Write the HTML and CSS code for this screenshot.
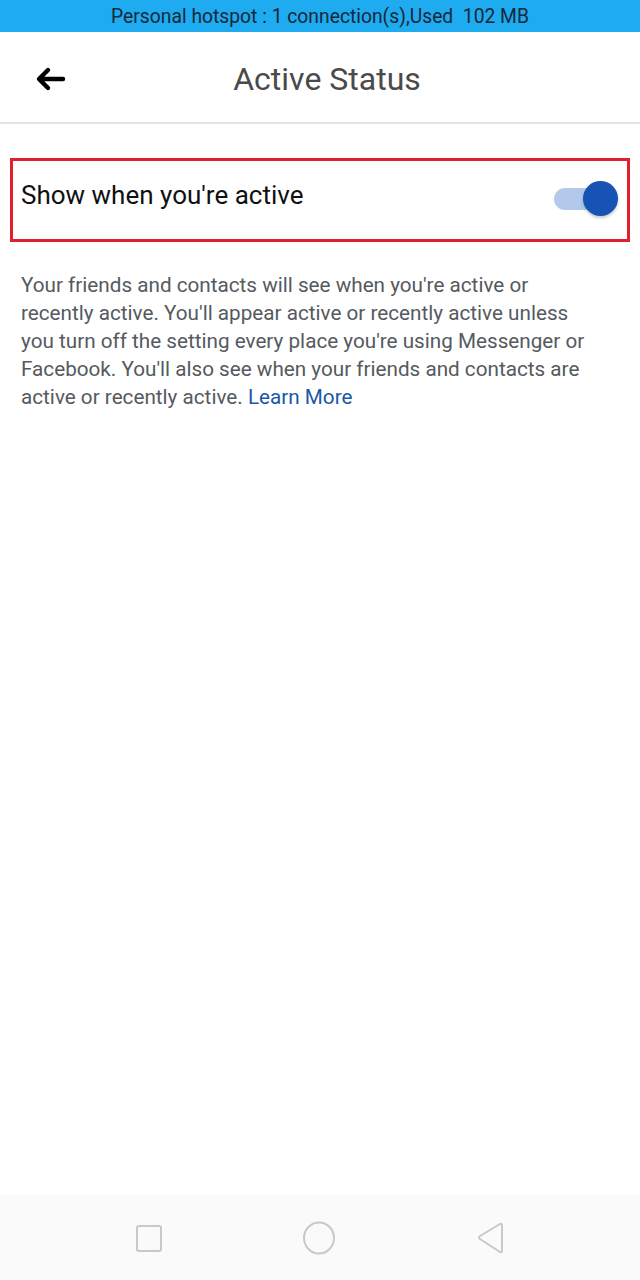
FILE: index.html
```html
<!DOCTYPE html>
<html>
<head>
<meta charset="utf-8">
<link rel="stylesheet" href="styles.css">
</head>
<body>
<div class="screen">
  <div class="statusbar">Personal hotspot : 1 connection(s),Used&nbsp; 102 MB</div>
  <header class="topbar">
    <svg class="back" width="32" height="26" viewBox="0 0 32 26">
      <path d="M29 13 H6 M14 4 L5 13 L14 22" fill="none" stroke="#000" stroke-width="4.4" stroke-linecap="round" stroke-linejoin="round"/>
    </svg>
    <h1 class="title">Active Status</h1>
  </header>
  <main class="content">
    <div class="setting-row">
      <span class="setting-label">Show when you're active</span>
      <span class="toggle"><span class="track"></span><span class="knob"></span></span>
    </div>
    <p class="desc">Your friends and contacts will see when you're active or recently active. You'll appear active or recently active unless you turn off the setting every place you're using Messenger or Facebook. You'll also see when your friends and contacts are active or recently active. <a class="link">Learn More</a></p>
  </main>
  <nav class="navbar">
    <svg width="28" height="28" viewBox="0 0 28 28"><rect x="2" y="2" width="24" height="25" rx="2" fill="none" stroke="#c8c8c8" stroke-width="2"/></svg>
    <svg width="34" height="34" viewBox="0 0 34 34"><ellipse cx="17" cy="17" rx="15" ry="15.5" fill="none" stroke="#c8c8c8" stroke-width="2"/></svg>
    <svg width="30" height="34" viewBox="0 0 30 34"><path d="M25 3 Q27 2 27 5 V29 Q27 32 25 31 L5 18 Q3 17 5 15 Z" fill="none" stroke="#c8c8c8" stroke-width="2" stroke-linejoin="round"/></svg>
  </nav>
</div>
</body>
</html>
```
FILE: styles.css
```css
* { box-sizing: border-box; }
html, body { margin: 0; padding: 0; background: #fff; }
body { font-family: Roboto, "Noto Sans", sans-serif; }
.screen { width: 640px; height: 1280px; display: flex; flex-direction: column; }
.statusbar {
  height: 32px; background: #1eabf0; color: #15283a;
  font-size: 19.3px; display: flex; align-items: center; justify-content: center;
  padding-top: 1px;
}
.topbar {
  height: 92px; border-bottom: 2px solid #e4e4e4;
  display: flex; align-items: center; justify-content: center; position: relative;
}
.back { position: absolute; left: 34px; top: 34px; }
.title { margin: 0; font-weight: 400; font-size: 32px; color: #4a4a4a; padding-left: 14px; padding-top: 4px; }
.content { flex: 1; padding: 34px 10px 0; }
.setting-row {
  height: 84px; border: 3.5px solid #e0202b;
  display: flex; align-items: center; justify-content: space-between;
  padding: 0 9px 10px 8px;
}
.setting-label { font-size: 26px; color: #111; }
.toggle { position: relative; width: 64px; height: 36px; margin-top: 6px; }
.track { position: absolute; left: 0; top: 8px; width: 50px; height: 22px; border-radius: 11px; background: #b3c9ec; }
.knob { position: absolute; right: 0; top: 1px; width: 35px; height: 35px; border-radius: 50%; background: #1653b5; box-shadow: 0 2px 3px rgba(0,0,0,0.22); }
.desc { margin: 29px 0 0 11px; font-size: 20.7px; line-height: 28px; color: #555a60; padding-right: 35px; }
.link { color: #1a57a8; text-decoration: none; }
.navbar {
  height: 85px; background: #fafafa;
  display: flex; align-items: center; justify-content: center; gap: 139px;
}
```
